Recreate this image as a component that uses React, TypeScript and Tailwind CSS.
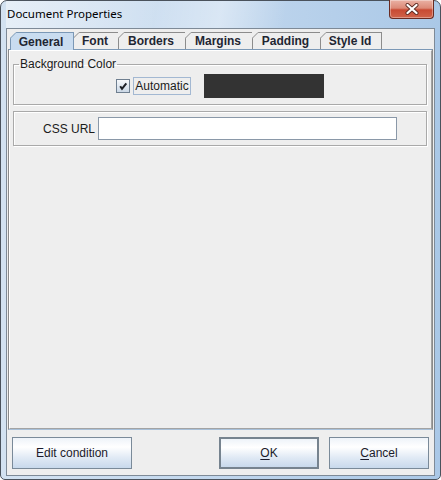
import React from "react";

const tabs = [
  { label: "General", w: "w-[64px]", selected: true },
  { label: "Font", w: "w-[46px]", selected: false },
  { label: "Borders", w: "w-[68px]", selected: false },
  { label: "Margins", w: "w-[68px]", selected: false },
  { label: "Padding", w: "w-[69px]", selected: false },
  { label: "Style Id", w: "w-[62px]", selected: false },
];

function Tab({ label, w, selected, first }: { label: string; w: string; selected: boolean; first: boolean }) {
  const stroke = selected ? "#7b98b6" : "#8c8c8c";
  return (
    <div
      className={`relative flex items-center justify-center pr-[2px] border-l border-t border-r ${w} ${
        first ? "" : "-ml-px"
      } ${
        selected
          ? "z-10 h-[18px] -mb-px bg-[#c9dcf0] border-[#7b98b6]"
          : "h-[17px] bg-[#eeeeee] border-[#8c8c8c]"
      }`}
    >
      <svg className="absolute -left-px -top-px" width="7" height="7" viewBox="0 0 7 7">
        <polygon points="0,0 6.5,0 0,6.5" fill="#eeeeee" />
        <line x1="0.5" y1="6" x2="6" y2="0.5" stroke={stroke} strokeWidth="1" />
      </svg>
      <span className="text-[12px] font-bold text-[#1f2633] leading-none">{label}</span>
    </div>
  );
}

function Btn({ children, w, strong }: { children: React.ReactNode; w: string; strong?: boolean }) {
  return (
    <div
      className={`${w} h-[32px] flex items-center justify-center text-[12px] text-[#1b1b2b] ${
        strong ? "border-2 border-[#76838f]" : "border border-[#7a8a99]"
      } bg-[linear-gradient(to_bottom,#eef3f9_0%,#ffffff_30%,#e1eaf5_65%,#c8d9ec_100%)]`}
    >
      {children}
    </div>
  );
}

export default function App() {
  return (
    <div className="w-[441px] h-[480px] bg-white font-['Liberation_Sans',Arial,sans-serif]">
      <div className="w-full h-full flex flex-col rounded-t-[7px] rounded-b-[5px] border border-[#4a525c] px-[5px] pb-[3px] bg-[linear-gradient(to_right,#d3e2f1_0%,#c3d8ee_45%,#aac8e7_100%)]">
        {/* title bar */}
        <div className="h-[27px] flex items-start justify-between bg-[linear-gradient(100deg,rgba(255,255,255,0.45)_0%,rgba(255,255,255,0.15)_35%,rgba(255,255,255,0.4)_50%,rgba(255,255,255,0)_65%)]">
          <span className="pl-[1px] pt-[5px] text-[11.5px] leading-[16px] text-black font-['Noto_Sans',sans-serif]">
            Document Properties
          </span>
          <div className="mr-[1px] w-[45px] h-[19px] -mt-px flex items-center justify-center rounded-b-[4px] border border-t-0 border-[#6a2b22] bg-[linear-gradient(to_bottom,#eab1a4_0%,#dc8a78_45%,#c84a33_55%,#d0634a_100%)] shadow-[inset_0_0_0_1px_rgba(255,255,255,0.35)]">
            <svg width="14" height="12" viewBox="0 0 14 12">
              <path d="M2.5 2 L11.5 10 M11.5 2 L2.5 10" stroke="#5b2a22" strokeWidth="4" strokeLinecap="round" />
              <path d="M2.5 2 L11.5 10 M11.5 2 L2.5 10" stroke="#ffffff" strokeWidth="2.3" strokeLinecap="round" />
            </svg>
          </div>
        </div>

        {/* client */}
        <div className="flex-1 flex flex-col border border-[#7e8a97] bg-[#eeeeee]">
          {/* tabs */}
          <div className="mt-[3px] ml-[3px] flex items-end">
            {tabs.map((t, i) => (
              <Tab key={t.label} label={t.label} w={t.w} selected={t.selected} first={i === 0} />
            ))}
          </div>

          {/* panel */}
          <div className="mx-[1px] flex-1 flex flex-col border border-t-[#7b98b6] border-l-[#8a8a8a] border-r-[#8a8a8a] border-b-[#a7bfd8]">
            <div className="flex-1 flex flex-col border border-l-white border-t-white border-r-[#a3a3a3] border-b-[#a3a3a3] pt-[6px] pl-[3px] pr-[4px]">
              <fieldset className="border border-[#a9a9a9] shadow-[1px_1px_0_#ffffff,inset_1px_1px_0_#ffffff]">
                <legend className="ml-[5px] px-[1px] text-[12px] leading-[14px] text-[#1b1b1b]">Background Color</legend>
                <div className="flex items-center justify-center pt-[3px] pb-[6px]">
                  <div className="w-[14px] h-[14px] border border-[#6f7f90] bg-[linear-gradient(to_bottom,#f6f8fb,#cbd8e6)] flex items-center justify-center">
                    <svg width="10" height="10" viewBox="0 0 10 10">
                      <path d="M2.2 5.2 L4 7.8 L8.3 2.3" fill="none" stroke="#1c1f26" strokeWidth="2" />
                    </svg>
                  </div>
                  <div className="ml-[3px] h-[18px] px-[1px] flex items-center border border-[#a3b8d2] text-[12px] text-[#1b1b1b]">
                    Automatic
                  </div>
                  <div className="ml-[13px] w-[120px] h-[24px] bg-[#333333]" />
                </div>
              </fieldset>

              <div className="mt-[6px] flex items-center justify-center pt-[5px] pb-[5px] border border-[#a9a9a9] shadow-[1px_1px_0_#ffffff,inset_1px_1px_0_#ffffff]">
                <span className="mr-[3px] text-[12px] text-[#1b1b1b]">CSS URL</span>
                <div className="w-[299px] h-[23px] bg-white border border-[#8a98a8]" />
              </div>
            </div>
          </div>

          {/* buttons */}
          <div className="flex items-center justify-between pt-[7px] pb-[6px] px-[5px]">
            <Btn w="w-[120px]">Edit condition</Btn>
            <div className="flex gap-[10px]">
              <Btn w="w-[100px]" strong>
                <span>
                  <span className="underline underline-offset-2">O</span>K
                </span>
              </Btn>
              <Btn w="w-[100px]">
                <span>
                  <span className="underline underline-offset-2">C</span>ancel
                </span>
              </Btn>
            </div>
          </div>
        </div>
      </div>
    </div>
  );
}
